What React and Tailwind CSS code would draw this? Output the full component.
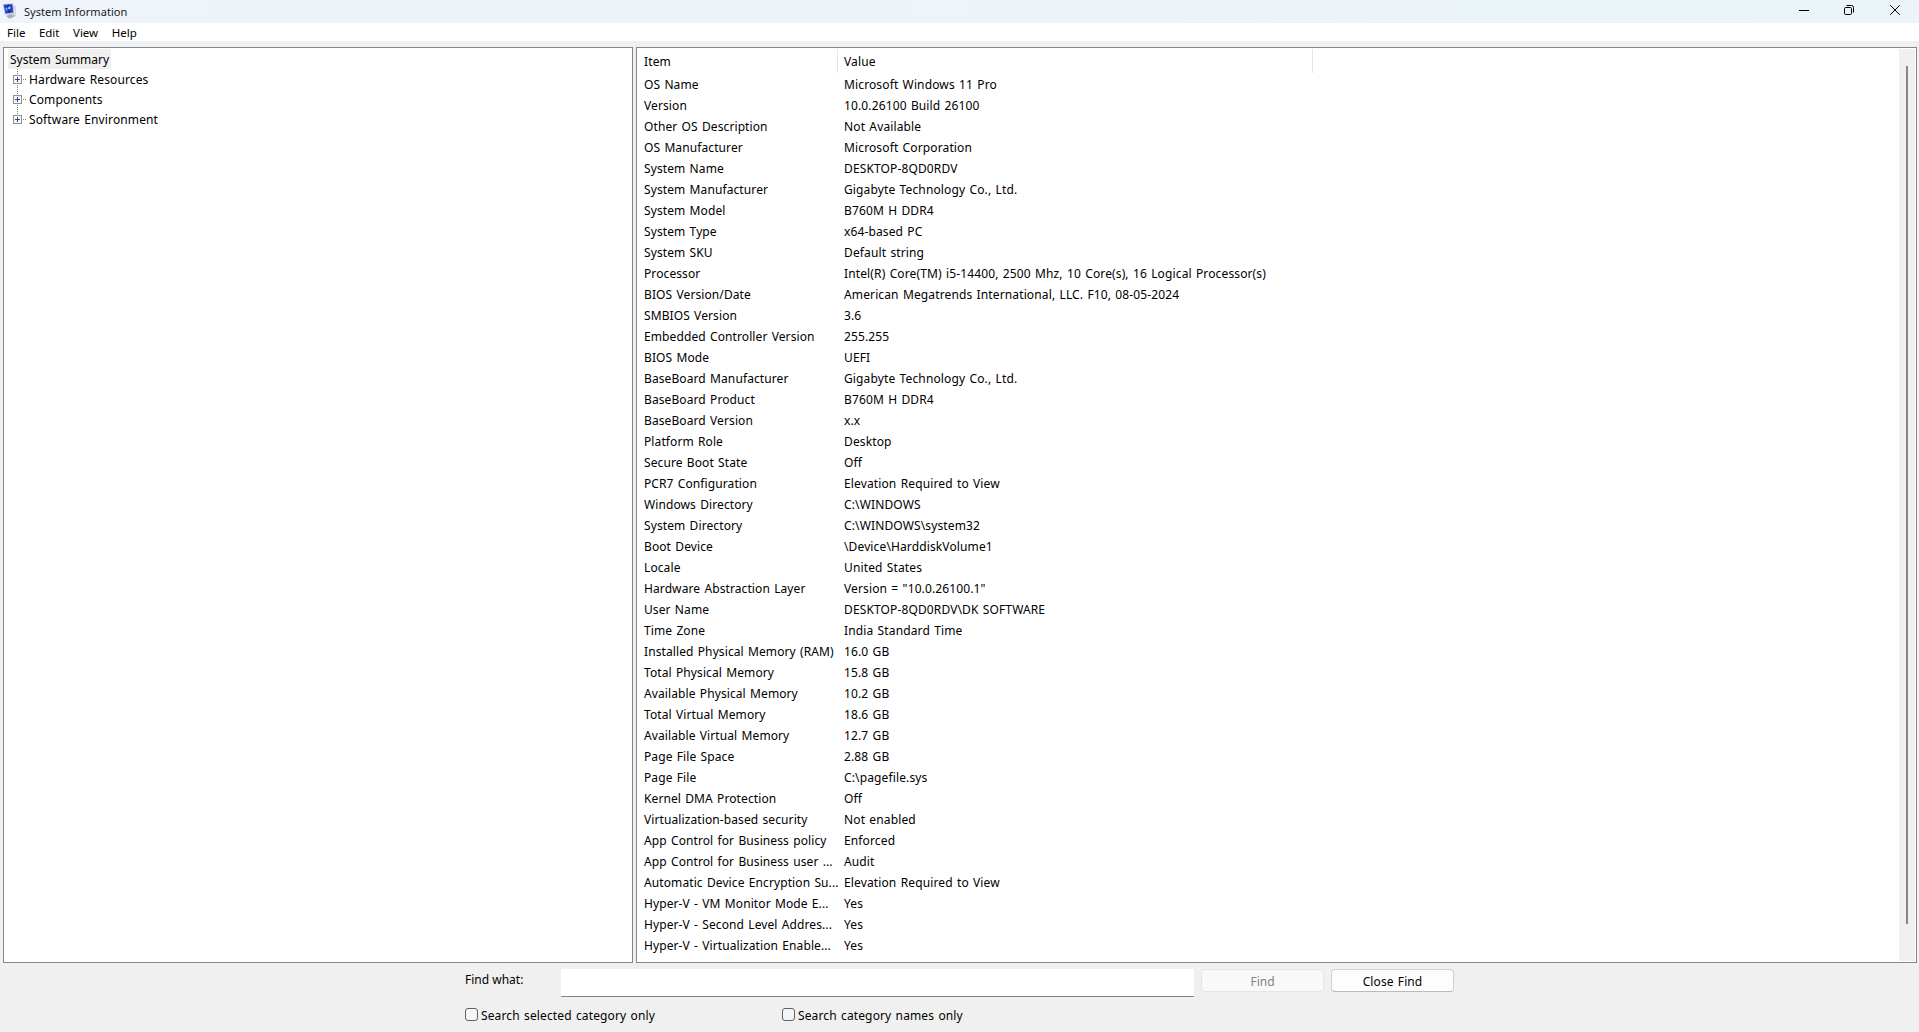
import React, { useState } from 'react';

const menuItems = ['File', 'Edit', 'View', 'Help'];

const categories = ['Hardware Resources', 'Components', 'Software Environment'];

const summary = [
  { item: 'OS Name', value: 'Microsoft Windows 11 Pro' },
  { item: 'Version', value: '10.0.26100 Build 26100' },
  { item: 'Other OS Description', value: 'Not Available' },
  { item: 'OS Manufacturer', value: 'Microsoft Corporation' },
  { item: 'System Name', value: 'DESKTOP-8QD0RDV' },
  { item: 'System Manufacturer', value: 'Gigabyte Technology Co., Ltd.' },
  { item: 'System Model', value: 'B760M H DDR4' },
  { item: 'System Type', value: 'x64-based PC' },
  { item: 'System SKU', value: 'Default string' },
  { item: 'Processor', value: 'Intel(R) Core(TM) i5-14400, 2500 Mhz, 10 Core(s), 16 Logical Processor(s)' },
  { item: 'BIOS Version/Date', value: 'American Megatrends International, LLC. F10, 08-05-2024' },
  { item: 'SMBIOS Version', value: '3.6' },
  { item: 'Embedded Controller Version', value: '255.255' },
  { item: 'BIOS Mode', value: 'UEFI' },
  { item: 'BaseBoard Manufacturer', value: 'Gigabyte Technology Co., Ltd.' },
  { item: 'BaseBoard Product', value: 'B760M H DDR4' },
  { item: 'BaseBoard Version', value: 'x.x' },
  { item: 'Platform Role', value: 'Desktop' },
  { item: 'Secure Boot State', value: 'Off' },
  { item: 'PCR7 Configuration', value: 'Elevation Required to View' },
  { item: 'Windows Directory', value: 'C:\\WINDOWS' },
  { item: 'System Directory', value: 'C:\\WINDOWS\\system32' },
  { item: 'Boot Device', value: '\\Device\\HarddiskVolume1' },
  { item: 'Locale', value: 'United States' },
  { item: 'Hardware Abstraction Layer', value: 'Version = "10.0.26100.1"' },
  { item: 'User Name', value: 'DESKTOP-8QD0RDV\\DK SOFTWARE' },
  { item: 'Time Zone', value: 'India Standard Time' },
  { item: 'Installed Physical Memory (RAM)', value: '16.0 GB' },
  { item: 'Total Physical Memory', value: '15.8 GB' },
  { item: 'Available Physical Memory', value: '10.2 GB' },
  { item: 'Total Virtual Memory', value: '18.6 GB' },
  { item: 'Available Virtual Memory', value: '12.7 GB' },
  { item: 'Page File Space', value: '2.88 GB' },
  { item: 'Page File', value: 'C:\\pagefile.sys' },
  { item: 'Kernel DMA Protection', value: 'Off' },
  { item: 'Virtualization-based security', value: 'Not enabled' },
  { item: 'App Control for Business policy', value: 'Enforced' },
  { item: 'App Control for Business user ...', value: 'Audit' },
  { item: 'Automatic Device Encryption Su...', value: 'Elevation Required to View' },
  { item: 'Hyper-V - VM Monitor Mode E...', value: 'Yes' },
  { item: 'Hyper-V - Second Level Addres...', value: 'Yes' },
  { item: 'Hyper-V - Virtualization Enable...', value: 'Yes' },
];

const AppIcon = () => (
  <svg width="16" height="16" viewBox="0 0 16 16">
    <path d="M10.5 2.5l3.5 1v9l-3 2.5-2-2z" fill="#c9cdd8" />
    <path d="M12 4l1.6 .5v7l-1.6 1z" fill="#e3e5ea" />
    <path d="M4 13l4-2 4.5 2-4 2.5H7z" fill="#a9adb9" />
    <path d="M.8 1L11 .4l1 9.6-9 1.4z" fill="#a5b5e4" />
    <path d="M1.7 1.9l8.5-.6.9 7.9-7.5 1.2z" fill="#2445c0" />
    <path d="M5.3 1.7l2.2-.2.9 8-2.2.4z" fill="#1a2da6" />
    <path d="M3.4 5.2l1.8-.6.4 2.6-1.6.4z" fill="#7da3f5" />
    <path d="M6.8 3.3l1.7 1-.8 2.2-1.5-.6z" fill="#c9dcff" />
  </svg>
);

// Small [+] box in front of a collapsed tree node
const Expander = ({ last }) => (
  <svg width="21" height="20" viewBox="0 0 21 20" shapeRendering="crispEdges">
    <path d={last ? 'M9.5 0v6' : 'M9.5 0v20'} stroke="#808080" strokeDasharray="1 1" />
    <path d="M15 10.5h4" stroke="#808080" strokeDasharray="1 1" />
    <rect x="5.5" y="6.5" width="8" height="8" fill="#f8f8f8" stroke="#919191" />
    <path d="M7 10.5h5M9.5 8v5" stroke="#30478f" />
  </svg>
);

const TitleBar = () => (
  <div className="flex h-[23px] shrink-0 items-center bg-gradient-to-r from-[#eff3fa] to-[#eaf4f9] pl-[2px]">
    <div className="pb-[2px]">
      <AppIcon />
    </div>
    <span className="ml-[6px] text-[11px] leading-[16px] tracking-[0.05px] text-[#1a1a1a]">System Information</span>
    <div className="ml-auto flex h-full pr-[1px]">
      <button className="flex w-[45px] items-start justify-center pt-[5px]">
        <svg width="10" height="10" viewBox="0 0 10 10" fill="none" stroke="#000">
          <path d="M0 5.5h10" />
        </svg>
      </button>
      <button className="flex w-[46px] items-start justify-center pt-[5px]">
        <svg width="10" height="10" viewBox="0 0 10 10" fill="none" stroke="#000">
          <rect x=".5" y="2.5" width="7" height="7" rx="1.2" />
          <path d="M2.5 .5h5a2 2 0 0 1 2 2v5" />
        </svg>
      </button>
      <button className="flex w-[46px] items-start justify-center pt-[5px]">
        <svg width="10" height="10" viewBox="0 0 10 10" fill="none" stroke="#000">
          <path d="M.2 .2l9.6 9.6M9.8 .2L.2 9.8" />
        </svg>
      </button>
    </div>
  </div>
);

const App = () => {
  const [findText, setFindText] = useState('');
  const [selectedOnly, setSelectedOnly] = useState(false);
  const [namesOnly, setNamesOnly] = useState(false);

  return (
    <div className="flex h-[1032px] w-[1919px] flex-col overflow-hidden bg-[#f0f0f0] font-['Noto_Sans','Open_Sans',sans-serif] text-[12px] leading-[20px] text-black">
      <TitleBar />

      {/* Menu */}
      <div className="flex h-[18px] shrink-0 gap-[13.5px] bg-white pl-[7px] text-[11.5px]">
        {menuItems.map((name) => (
          <span key={name}>{name}</span>
        ))}
      </div>

      <div className="flex h-[922px] shrink-0 gap-[3px] pt-[6px] pl-[3px] pr-[2px] tracking-[0.13px] [word-spacing:1px]">
        {/* Category tree */}
        <div className="w-[630px] border border-[#828790] bg-white pt-[1px] pl-[4px]">
          <div className="flex">
            <span className="h-[20px] w-[103px] whitespace-nowrap bg-[#f0f0f0] pl-[2px] leading-[22px] tracking-normal">
              System Summary
            </span>
          </div>
          {categories.map((name, index) => (
            <div key={name} className="flex h-[20px]">
              <Expander last={index === categories.length - 1} />
              <span className="leading-[22px]">{name}</span>
            </div>
          ))}
        </div>

        {/* Details list */}
        <div className="flex flex-1 border border-[#828790] bg-white p-[1px]">
          <div className="flex-1">
            <div className="flex h-[24px] leading-[25px]">
              <div className="w-[200px] border-r border-[#e5e5e5] pl-[6px]">Item</div>
              <div className="w-[475px] border-r border-[#e5e5e5] pl-[6px]">Value</div>
            </div>
            {summary.map((row, index) => (
              <div key={index} className="flex h-[21px] whitespace-nowrap leading-[24px]">
                <div className="w-[200px] pl-[6px] tracking-[0.1px]">{row.item}</div>
                <div className="pl-[6px]">{row.value}</div>
              </div>
            ))}
          </div>
          <div className="flex w-[16px] justify-center bg-[#f0f0f0] pt-[17px]">
            <div className="h-[858px] w-[2px] bg-[#858585]" />
          </div>
        </div>
      </div>

      {/* Find bar */}
      <div className="flex pl-[465px] pt-[6px]">
        <label className="w-[96px] shrink-0 pt-[1px]">Find what:</label>
        <input
          value={findText}
          onChange={(e) => setFindText(e.target.value)}
          className="h-[28px] w-[633px] border-b border-[#868686] bg-white px-1 outline-none"
        />
        <button
          disabled={!findText}
          className="ml-[7px] h-[23px] w-[123px] rounded-[4px] border border-[#e5e5e5] bg-[#f9f9f9] text-center leading-[23px] disabled:text-[#838383]"
        >
          Find
        </button>
        <button className="ml-[7px] h-[23px] w-[123px] rounded-[4px] border border-[#d0d0d0] border-b-[#bababa] bg-[#fdfdfd] text-center leading-[23px] tracking-[0.1px] [word-spacing:1px]">
          Close Find
        </button>
      </div>
      <div className="flex pl-[465px] pt-[8px] tracking-[0.13px] [word-spacing:1px]">
        <label className="flex w-[317px] items-center gap-[3px]">
          <input
            type="checkbox"
            checked={selectedOnly}
            onChange={(e) => setSelectedOnly(e.target.checked)}
            className="mb-[2px] h-[13px] w-[13px] appearance-none rounded-[3px] border border-[#626262] bg-[#f5f5f5]"
          />
          <span className="pt-[1px]">Search selected category only</span>
        </label>
        <label className="flex items-center gap-[3px]">
          <input
            type="checkbox"
            checked={namesOnly}
            onChange={(e) => setNamesOnly(e.target.checked)}
            className="mb-[2px] h-[13px] w-[13px] appearance-none rounded-[3px] border border-[#626262] bg-[#f5f5f5]"
          />
          <span className="pt-[1px]">Search category names only</span>
        </label>
      </div>
    </div>
  );
};

export default App;
